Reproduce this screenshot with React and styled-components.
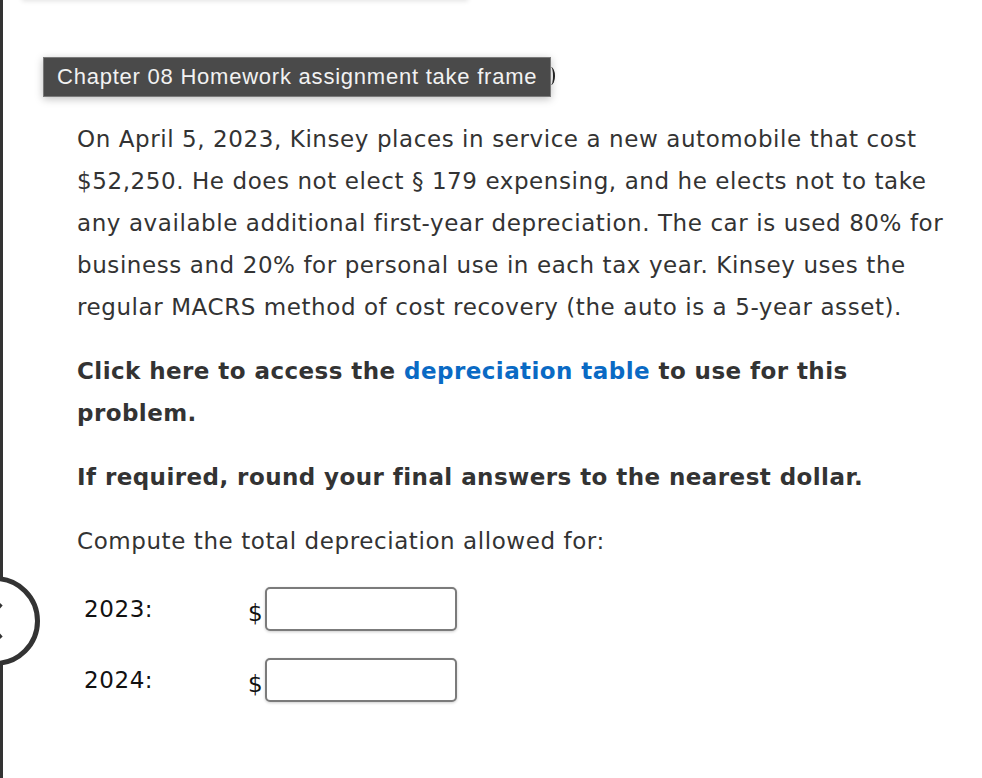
import styled, { createGlobalStyle } from "styled-components";

const GlobalStyle = createGlobalStyle`
  html, body {
    margin: 0;
    padding: 0;
    background: #ffffff;
  }
  body {
    font-family: "DejaVu Sans", Verdana, sans-serif;
  }
`;

const Page = styled.div`
  position: relative;
  display: flex;
  width: 982px;
  height: 778px;
  overflow: hidden;
  background: #ffffff;

  /* bottom edge of the header panel that sits above the viewport */
  &::before {
    content: "";
    position: absolute;
    top: -10px;
    left: 22px;
    width: 446px;
    height: 10px;
    box-shadow: 0 1px 5px rgba(0, 0, 0, 0.12);
  }
`;

const Rail = styled.div`
  flex: 0 0 3px;
  background: #333333;
`;

const Tooltip = styled.div`
  position: absolute;
  top: 57px;
  left: 43px;
  box-sizing: border-box;
  width: 508px;
  height: 40px;
  padding: 0 0 0 13px;
  display: flex;
  align-items: center;
  background: #4a4a4a;
  border: 1px solid #7a7a7a;
  box-shadow: 0 2px 8px rgba(0, 0, 0, 0.25);
  color: #f2f2f2;
  font-family: "Liberation Sans", Arial, sans-serif;
  font-size: 22px;
  letter-spacing: 0.77px;
  white-space: nowrap;

  &::after {
    content: "";
    position: absolute;
    top: 9px;
    right: -5px;
    width: 8px;
    height: 18px;
    border-radius: 50%;
    border-right: 2px solid #222;
    box-sizing: border-box;
  }
`;

const NavButton = styled.button`
  position: absolute;
  top: 576px;
  left: -50px;
  width: 90px;
  height: 90px;
  border-radius: 50%;
  border: 5px solid #333333;
  background: #ffffff;
  display: flex;
  align-items: center;
  justify-content: flex-start;
  padding: 0 0 0 28px;
  box-sizing: border-box;
`;

const Content = styled.div`
  padding: 118px 0 0 74px;
  width: 872px;
  color: #333333;
  font-size: 23px;
  letter-spacing: 0.58px;
`;

const Para = styled.p`
  margin: 0 0 ${(p) => p.gap || 20}px;
  line-height: 42px;
  font-weight: ${(p) => (p.bold ? 700 : 400)};
  letter-spacing: ${(p) => (p.bold ? "0.44px" : "0.58px")};
`;

const Link = styled.a`
  color: #0a6ac4;
  text-decoration: none;
`;

const AnswerList = styled.div`
  display: flex;
  flex-direction: column;
  gap: 25px;
  padding-left: 7px;
`;

const AnswerRow = styled.div`
  display: flex;
  align-items: center;
  height: 46px;
`;

const YearLabel = styled.span`
  width: 164px;
  color: #111111;
`;

const Dollar = styled.span`
  width: 17px;
  color: #111111;
  margin-top: 8px;
`;

const AmountInput = styled.input`
  box-sizing: border-box;
  width: 192px;
  height: 44px;
  border: 2px solid #7b7b7b;
  border-radius: 5px;
  box-shadow: 0 1px 3px rgba(0, 0, 0, 0.2);
  font-size: 18px;
  outline: none;
`;

export default function App() {
  return (
    <>
      <GlobalStyle />
      <Page>
        <Rail />
        <Content>
          <Para gap={22}>
            On April 5, 2023, Kinsey places in service a new automobile that
            cost $52,250. He does not elect § 179 expensing, and he elects not
            to take any available additional first-year depreciation. The car
            is used 80% for business and 20% for personal use in each tax
            year. Kinsey uses the regular MACRS method of cost recovery (the
            auto is a 5-year asset).
          </Para>
          <Para bold gap={22}>
            Click here to access the <Link href="#">depreciation table</Link>{" "}
            to use for this problem.
          </Para>
          <Para bold gap={22}>
            If required, round your final answers to the nearest dollar.
          </Para>
          <Para gap={24}>Compute the total depreciation allowed for:</Para>
          <AnswerList>
            {["2023", "2024"].map((year) => (
              <AnswerRow key={year}>
                <YearLabel>{year}:</YearLabel>
                <Dollar>$</Dollar>
                <AmountInput type="text" aria-label={year} />
              </AnswerRow>
            ))}
          </AnswerList>
        </Content>
        <NavButton aria-label="Previous">
          <svg width="20" height="38" viewBox="0 0 20 38">
            <path d="M18 2 L3 19 L18 36" fill="none" stroke="#333" strokeWidth="4.5" />
          </svg>
        </NavButton>
        <Tooltip>Chapter 08 Homework assignment take frame</Tooltip>
      </Page>
    </>
  );
}
